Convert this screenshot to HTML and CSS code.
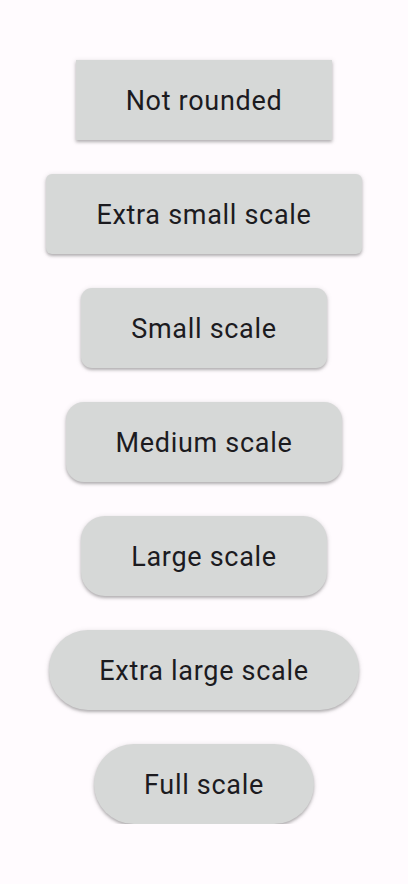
FILE: index.html
```html
<!DOCTYPE html>
<html lang="en">
<head>
    <meta charset="UTF-8">
    <meta name="viewport" content="width=device-width, initial-scale=1.0">
    <title>Shape scale</title>
    <link rel="stylesheet" href="styles.css">
</head>
<body>
    <div class="list">
        <button class="button none">Not rounded</button>
        <button class="button extra-small">Extra small scale</button>
        <button class="button small">Small scale</button>
        <button class="button medium">Medium scale</button>
        <button class="button large">Large scale</button>
        <button class="button extra-large">Extra large scale</button>
        <button class="button full">Full scale</button>
    </div>
</body>
</html>
```

FILE: styles.css
```css
body {
    margin: 0;
    background: #fffbfe;
    font-family: Roboto, "Noto Sans", sans-serif;
}
.list {
    display: flex;
    flex-direction: column;
    align-items: center;
    gap: 34px;
    padding-top: 60px;
}
.button {
    height: 80px;
    padding: 2px 50px 0;
    border: none;
    background: #d6d8d7;
    color: #1c1b1f;
    font-family: inherit;
    font-size: 27px;
    letter-spacing: 0.7px;
    cursor: pointer;
    box-shadow: 0 2px 3px rgba(0, 0, 0, 0.25), 0 1px 5px 1px rgba(0, 0, 0, 0.08);
}
.none { border-radius: 0; }
.extra-small { border-radius: 6px; }
.small { border-radius: 11px; }
.medium { border-radius: 18px; }
.large { border-radius: 24px; }
.extra-large { border-radius: 39px; }
.full { border-radius: 40px; }
```
